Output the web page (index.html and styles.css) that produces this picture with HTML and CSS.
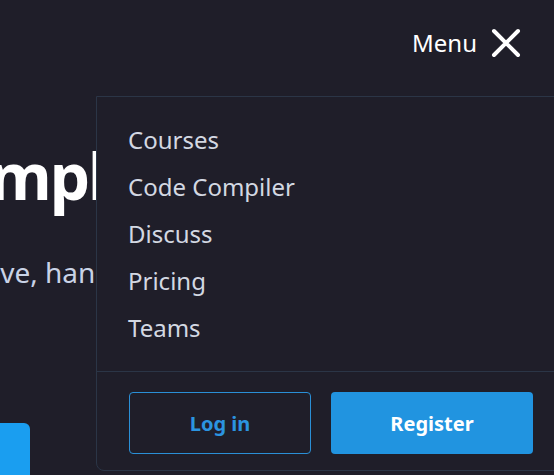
FILE: index.html
```html
<!DOCTYPE html>
<html lang="en">
<head>
  <meta charset="UTF-8" />
  <title>Menu</title>
  <link rel="stylesheet" href="styles.css">
</head>
<body>
  <header class="topbar">
    <button class="menu-toggle">
      <span>Menu</span>
      <svg width="32" height="32" viewBox="0 0 32 32" aria-hidden="true">
        <path d="M4 4 L28 28 M28 4 L4 28" stroke="#fff" stroke-width="4" stroke-linecap="round" fill="none"/>
      </svg>
    </button>
  </header>

  <section class="hero">
    <h1 class="hero-title">simple</h1>
    <p class="hero-sub">Interactive, hands-on learning</p>
    <a class="hero-cta" href="#" aria-label="Start"></a>
  </section>

  <!-- open dropdown menu -->
  <div class="menu-panel">
    <nav class="menu-links">
      <a href="#">Courses</a>
      <a href="#">Code Compiler</a>
      <a href="#">Discuss</a>
      <a href="#">Pricing</a>
      <a href="#">Teams</a>
    </nav>
    <div class="menu-actions">
      <a class="btn btn-outline" href="#">Log in</a>
      <a class="btn btn-primary" href="#">Register</a>
    </div>
  </div>
</body>
</html>
```

FILE: styles.css
```css
body {
  margin: 0;
  background: #1f1e29;
  font-family: 'Noto Sans', 'Open Sans', sans-serif;
  color: #fff;
  overflow: hidden;
  height: 475px;
  position: relative;
}
.topbar {
  display: flex;
  justify-content: flex-end;
  padding: 26px 32px 0 0;
}
.menu-toggle {
  display: flex;
  align-items: center;
  gap: 13px;
  background: none;
  border: none;
  padding: 0;
  color: #fff;
  font-family: inherit;
  font-size: 24px;
  cursor: pointer;
}
.hero {
  padding-top: 82px;
  white-space: nowrap;
}
.hero-title {
  margin: 0 0 0 -58px;
  font-size: 64px;
  font-weight: 700;
  line-height: 1.1;
  letter-spacing: -2px;
}
.hero-sub {
  margin: 42px 0 0 -110px;
  font-size: 28px;
  color: #c9d3e6;
}
.hero-cta {
  display: block;
  width: 30px;
  height: 60px;
  margin-top: 132px;
  background: #1a9ef0;
  border-radius: 0 6px 0 0;
}
.menu-panel {
  position: absolute;
  top: 96px;
  left: 96px;
  right: -10px;
  background: #1f1e29;
  border: 1px solid #2b3546;
  border-radius: 0 0 0 8px;
}
.menu-links {
  display: flex;
  flex-direction: column;
  padding: 19px 0 20px 31px;
}
.menu-links a {
  color: #d3d8e2;
  text-decoration: none;
  font-size: 24px;
  line-height: 47px;
}
.menu-actions {
  display: grid;
  grid-template-columns: 182px 202px;
  gap: 20px;
  padding: 20px 0 16px 32px;
  border-top: 1px solid #2b3546;
}
.btn {
  display: flex;
  align-items: center;
  justify-content: center;
  height: 62px;
  box-sizing: border-box;
  border-radius: 4px;
  font-size: 20px;
  font-weight: 700;
  text-decoration: none;
}
.btn-outline {
  border: 1px solid #2a8fd6;
  color: #2b94e0;
}
.btn-primary {
  background: #2194e0;
  color: #fff;
}
```
